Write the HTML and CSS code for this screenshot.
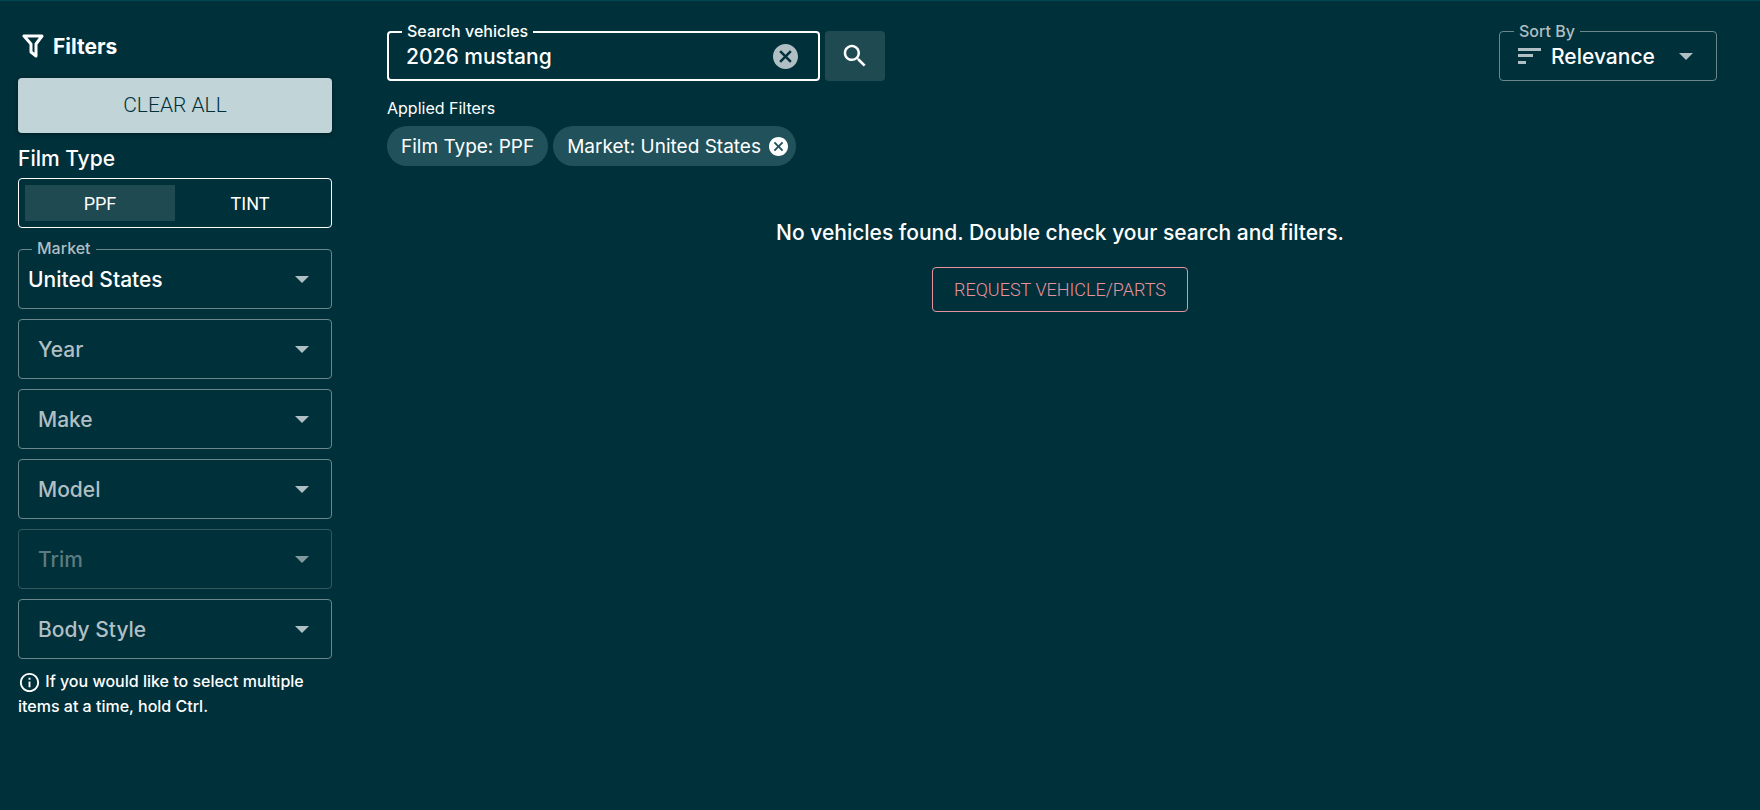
FILE: index.html
```html
<!DOCTYPE html>
<html lang="en">

<head>
    <meta charset="utf-8">
    <meta name="viewport" content="width=device-width, initial-scale=1">
    <title>Vehicle Search</title>
    <link rel="stylesheet" href="styles.css">
</head>

<body>
<div class="page">
    <aside class="sidebar">
        <h2 class="sidebar-title">
            <svg class="icon-filter" viewBox="0 0 22 24">
                <path d="M2 2h18l-6 8v12l-5-4v-8z"/>
            </svg>
            Filters
        </h2>
        <button type="button" class="btn btn-clear">CLEAR ALL</button>

        <h3 class="group-title">Film Type</h3>
        <div class="toggle">
            <button type="button" class="toggle-item active">PPF</button>
            <button type="button" class="toggle-item">TINT</button>
        </div>

        <form class="filters">
            <div class="field filled">
                <label for="market" class="field-label">Market</label>
                <select id="market">
                    <option>United States</option>
                </select>
                <svg class="caret" viewBox="0 0 14 7"><path d="M0 0h14L7 7z"/></svg>
            </div>
            <div class="field">
                <select id="year" aria-label="Year">
                    <option>Year</option>
                </select>
                <svg class="caret" viewBox="0 0 14 7"><path d="M0 0h14L7 7z"/></svg>
            </div>
            <div class="field">
                <select id="make" aria-label="Make">
                    <option>Make</option>
                </select>
                <svg class="caret" viewBox="0 0 14 7"><path d="M0 0h14L7 7z"/></svg>
            </div>
            <div class="field">
                <select id="model" aria-label="Model">
                    <option>Model</option>
                </select>
                <svg class="caret" viewBox="0 0 14 7"><path d="M0 0h14L7 7z"/></svg>
            </div>
            <div class="field">
                <select id="trim" aria-label="Trim" disabled>
                    <option>Trim</option>
                </select>
                <svg class="caret" viewBox="0 0 14 7"><path d="M0 0h14L7 7z"/></svg>
            </div>
            <div class="field">
                <select id="bodyStyle" aria-label="Body Style">
                    <option>Body Style</option>
                </select>
                <svg class="caret" viewBox="0 0 14 7"><path d="M0 0h14L7 7z"/></svg>
            </div>
        </form>

        <p class="hint">
            <svg class="icon-info" viewBox="0 0 24 24">
                <path d="M11 7h2v2h-2zm0 4h2v6h-2zm1-9C6.480 2 2 6.480 2 12s4.480 10 10 10 10-4.480 10-10S17.520 2 12 2zm0 18c-4.410 0-8-3.590-8-8s3.590-8 8-8 8 3.590 8 8-3.590 8-8 8z"/>
            </svg>
            If you would like to select multiple items at a time, hold Ctrl.
        </p>
    </aside>

    <main class="main">
        <div class="toolbar">
            <form class="search">
                <div class="search-field">
                    <label for="search" class="field-label">Search vehicles</label>
                    <input id="search" type="text" value="2026 mustang">
                    <button type="button" class="icon-btn" aria-label="Clear search">
                        <svg class="icon-clear" viewBox="2 2 20 20">
                            <path d="M12 2C6.470 2 2 6.470 2 12s4.470 10 10 10 10-4.470 10-10S17.530 2 12 2zm5 13.590L15.590 17 12 13.410 8.410 17 7 15.590 10.590 12 7 8.410 8.410 7 12 10.590 15.590 7 17 8.410 13.410 12z"/>
                        </svg>
                    </button>
                </div>
                <button type="submit" class="btn btn-search" aria-label="Search">
                    <svg class="icon-search" viewBox="0 0 24 24">
                        <path d="M15.500 14h-.79l-.28-.27C15.410 12.590 16 11.110 16 9.500 16 5.910 13.090 3 9.500 3S3 5.910 3 9.500 5.910 16 9.500 16c1.610 0 3.090-.59 4.230-1.570l.27.28v.79l5 4.990L20.490 19zm-6 0C7.010 14 5 11.990 5 9.500S7.010 5 9.500 5 14 7.010 14 9.500 11.990 14 9.500 14z"/>
                    </svg>
                </button>
            </form>
            <div class="sort">
                <label for="sort" class="field-label">Sort By</label>
                <svg class="icon-sort" viewBox="0 0 23 16">
                    <path d="M0 0h23v3H0zM0 6h15v3H0zM0 13h8v3H0z"/>
                </svg>
                <select id="sort">
                    <option>Relevance</option>
                </select>
                <svg class="caret" viewBox="0 0 14 7"><path d="M0 0h14L7 7z"/></svg>
            </div>
        </div>

        <div class="applied">
            <p class="applied-title">Applied Filters</p>
            <div class="chips">
                <span class="chip">Film Type: PPF</span>
                <span class="chip">
                    Market: United States
                    <button type="button" class="icon-btn" aria-label="Remove market filter">
                        <svg class="icon-remove" viewBox="2 2 20 20">
                            <path d="M12 2C6.470 2 2 6.470 2 12s4.470 10 10 10 10-4.470 10-10S17.530 2 12 2zm5 13.590L15.590 17 12 13.410 8.410 17 7 15.590 10.590 12 7 8.410 8.410 7 12 10.590 15.590 7 17 8.410 13.410 12z"/>
                        </svg>
                    </button>
                </span>
            </div>
        </div>

        <div class="empty">
            <p class="empty-text">No vehicles found. Double check your search and filters.</p>
            <button type="button" class="btn btn-request">REQUEST VEHICLE/PARTS</button>
        </div>
    </main>
</div>
</body>

</html>
```
FILE: styles.css
```css
* {
    box-sizing: border-box;
    margin: 0;
    padding: 0;
}

body {
    background: #00303a;
    color: #ffffff;
    font-family: Inter, sans-serif;
    font-size: 21px;
    font-weight: 500;
    line-height: 25px;
}

button,
input,
select {
    font: inherit;
    color: inherit;
    background: none;
    border: none;
    outline: none;
}

svg {
    display: block;
    fill: currentColor;
}

.page {
    display: flex;
    min-height: 100vh;
    border-top: 1px solid #004852;
}

/* sidebar */

.sidebar {
    flex: 0 0 350px;
    padding: 30px 18px;
}

.sidebar-title {
    display: flex;
    align-items: center;
    gap: 9px;
    height: 30px;
    padding-left: 4px;
    margin-bottom: 17px;
    font-size: 21px;
    font-weight: 700;
}

.icon-filter {
    width: 22px;
    height: 24px;
    fill: none;
    stroke: currentColor;
    stroke-width: 3;
    stroke-linejoin: round;
}

.btn {
    border-radius: 4px;
    font-family: Roboto, sans-serif;
    font-weight: 300;
    cursor: pointer;
}

.btn-clear {
    width: 100%;
    height: 55px;
    background: #c1d4d7;
    color: #00303a;
    font-size: 21px;
    box-shadow: 0 1px 4px rgba(0, 0, 0, 0.4);
}

.group-title {
    margin: 13px 0 7px;
    font-size: 21px;
    font-weight: 500;
}

.toggle {
    display: flex;
    height: 50px;
    padding: 6px;
    border: 1px solid #ffffff;
    border-radius: 4px;
}

.toggle-item {
    flex: 1;
    font-family: Roboto, sans-serif;
    font-size: 18px;
    font-weight: 400;
}

.toggle-item.active {
    background: #1f4a52;
}

.filters {
    display: flex;
    flex-direction: column;
    gap: 10px;
    margin-top: 21px;
}

.field {
    position: relative;
    height: 60px;
    color: #b0bfc3;
}

.field select {
    width: 100%;
    height: 100%;
    padding: 0 40px 0 19px;
    border: 1px solid #6b878c;
    border-radius: 4px;
    appearance: none;
}

.field.filled select {
    padding-left: 9px;
    color: #ffffff;
}

.field select:disabled {
    border-color: #33595f;
    color: #5c7b81;
    opacity: 1;
}

.field select:disabled + .caret {
    color: #82999e;
}

.field-label {
    position: absolute;
    top: -11px;
    left: 14px;
    padding: 0 5px;
    background: #00303a;
    color: #b0bfc3;
    font-size: 16px;
    line-height: 20px;
}

.caret {
    position: absolute;
    top: 50%;
    right: 23px;
    width: 14px;
    height: 7px;
    margin-top: -3px;
    pointer-events: none;
}

.hint {
    margin-top: 10px;
    font-size: 16px;
}

.icon-info {
    display: inline-block;
    width: 23px;
    height: 23px;
    vertical-align: middle;
}

/* results */

.main {
    flex: 1;
    padding: 30px 27px 30px 37px;
}

.toolbar {
    display: flex;
    justify-content: space-between;
    padding-right: 16px;
}

.search {
    display: flex;
    gap: 5px;
}

.search-field {
    position: relative;
    display: flex;
    align-items: center;
    width: 433px;
    height: 50px;
    padding: 0 20px 0 17px;
    border: 2px solid #ffffff;
    border-radius: 4px;
}

.search-field .field-label {
    top: -12px;
    left: 13px;
    color: #ffffff;
}

.search-field input {
    flex: 1;
    min-width: 0;
}

.icon-btn {
    cursor: pointer;
}

.icon-clear {
    width: 25px;
    height: 25px;
    color: #b0bfc3;
}

.btn-search {
    display: flex;
    align-items: center;
    justify-content: center;
    width: 60px;
    height: 50px;
    background: #1f4a52;
}

.icon-search {
    width: 30px;
    height: 30px;
}

.sort {
    position: relative;
    display: flex;
    align-items: center;
    gap: 10px;
    width: 218px;
    height: 50px;
    padding-left: 18px;
    border: 1px solid #6b878c;
    border-radius: 4px;
    color: #b0bfc3;
}

.sort select {
    flex: 1;
    height: 100%;
    appearance: none;
    color: #ffffff;
}

.icon-sort {
    width: 23px;
    height: 16px;
}

.applied {
    margin-top: 15px;
}

.applied-title {
    font-size: 16px;
    font-weight: 400;
}

.chips {
    display: flex;
    gap: 5px;
    margin-top: 5px;
}

.chip {
    display: flex;
    align-items: center;
    gap: 8px;
    height: 40px;
    padding: 0 14px;
    border-radius: 20px;
    background: #21525c;
    font-size: 19px;
    font-weight: 400;
}

.chip:last-child {
    padding-right: 8px;
}

.icon-remove {
    width: 19px;
    height: 19px;
}

.empty {
    display: flex;
    flex-direction: column;
    align-items: center;
    gap: 22px;
    margin-top: 54px;
}

.btn-request {
    height: 45px;
    padding: 0 21px;
    border: 1px solid #e8929d;
    color: #e8929d;
    font-size: 18px;
}
```
